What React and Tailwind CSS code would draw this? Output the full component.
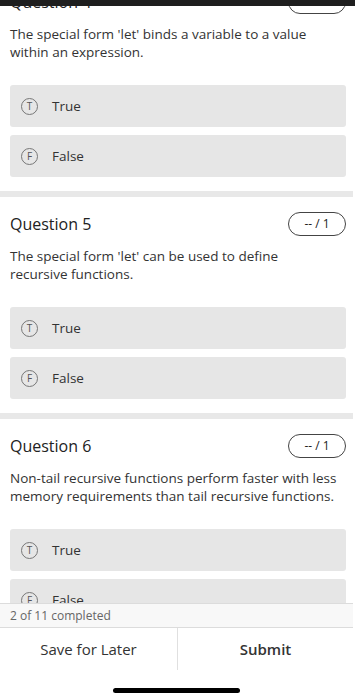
import React from 'react';

const questions = [
  {
    id: 4,
    text: "The special form 'let' binds a variable to a value within an expression.",
  },
  {
    id: 5,
    text: "The special form 'let' can be used to define recursive functions.",
  },
  {
    id: 6,
    text: 'Non-tail recursive functions perform faster with less memory requirements than tail recursive functions.',
  },
];

const Option = ({ letter, label }) => (
  <div className="flex items-center h-[42px] bg-[#e6e6e6] rounded-[3px] pl-[11px]">
    <span className="flex items-center justify-center w-[17px] h-[17px] rounded-full border border-[#777] text-[10px] text-[#555] leading-none">
      {letter}
    </span>
    <span className="ml-[14px] text-[13.5px] text-[#333]">{label}</span>
  </div>
);

const Question = ({ q, first }) => (
  <section className={`pl-[10px] pr-[7px] pt-[15px] pb-[14px] ${first ? '-mt-[25px]' : ''}`}>
    <div className="flex items-center justify-between h-[24px]">
      <h2 className="text-[16px] text-[#222]">Question {q.id}</h2>
      <span className="flex items-center justify-center w-[58px] h-[24px] rounded-full border-[1.5px] border-[#444] text-[12px] font-medium text-[#222]">
        -- / 1
      </span>
    </div>
    <p className="mt-[11px] max-w-[328px] text-[13.5px] leading-[18px] text-[#333]">{q.text}</p>
    <div className="mt-[24px] flex flex-col gap-[8px]">
      <Option letter="T" label="True" />
      <Option letter="F" label="False" />
    </div>
  </section>
);

const App = () => {
  return (
    <div
      className="relative w-[355px] h-[700px] flex flex-col bg-white overflow-hidden"
      style={{ fontFamily: '"Open Sans", "Noto Sans", sans-serif' }}
    >
      <div className="absolute top-0 left-0 right-0 h-[6px] bg-[#1e1e1e] z-10" />

      <main className="flex-1 overflow-hidden w-[353px]">
        {questions.map((q, i) => (
          <React.Fragment key={q.id}>
            {i > 0 && <div className="h-[6px] bg-[#e8e8e8]" />}
            <Question q={q} first={i === 0} />
          </React.Fragment>
        ))}
      </main>

      <footer className="w-[353px] bg-white">
        <div className="h-[25px] flex items-center px-[10px] bg-[#f8f8f8] border-t border-b border-[#dcdcdc] text-[12px] text-[#666]">
          2 of 11 completed
        </div>
        <div className="flex h-[42px]">
          <button className="w-[178px] border-r border-[#e0e0e0] text-[15px] text-[#333]">
            Save for Later
          </button>
          <button className="flex-1 text-[15px] font-semibold text-[#333]">Submit</button>
        </div>
        <div className="h-[30px] flex justify-center pt-[18px]">
          <div className="w-[127px] h-[5px] rounded-full bg-black" />
        </div>
      </footer>
    </div>
  );
};

export default App;
